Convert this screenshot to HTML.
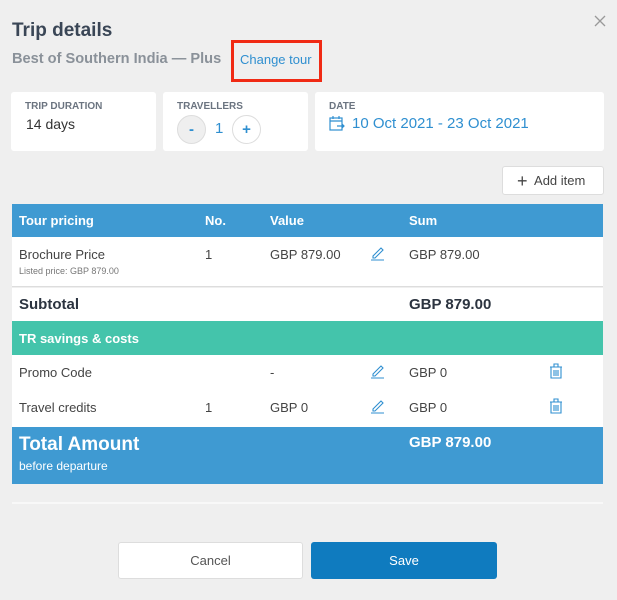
<!DOCTYPE html>
<html><head><meta charset="utf-8"><style>
*{margin:0;padding:0;box-sizing:border-box}
body{width:617px;height:600px;background:#efefef;font-family:"Liberation Sans",Arial,sans-serif;position:relative;overflow:hidden;color:#333}
.a{position:absolute}
.card{position:absolute;background:#fff;border-radius:3px;top:92px;height:59px}
.lbl{position:absolute;left:14px;top:9px;font-size:10px;font-weight:bold;color:#6b7480}
.row{position:absolute;left:12px;width:591px}
.t{position:absolute;font-size:13px;color:#444}
.w{color:#fff;font-weight:bold}
.circ{position:absolute;width:29px;height:29px;border-radius:50%;border:1px solid #ddd;text-align:center;line-height:27px;font-size:15px;color:#2f8fd0;font-weight:bold}
</style></head><body>
<div class="a" style="left:12px;top:20px;font-size:19px;font-weight:bold;color:#3a4656">Trip details</div>
<svg class="a" style="left:594px;top:15px" width="12" height="12" viewBox="0 0 12 12" stroke="#999" stroke-width="1.3"><path d="M1 1l10 10M11 1L1 11"/></svg>
<div class="a" style="left:12px;top:51px;font-size:14.6px;font-weight:bold;color:#8a9199">Best of Southern India — Plus</div>
<div class="a" style="left:231px;top:40px;width:91px;height:42px;border:3px solid #f02a14"></div>
<div class="a" style="left:240px;top:52px;font-size:13px;color:#2f8fd0">Change tour</div>

<div class="card" style="left:11px;width:145px"><div class="lbl">TRIP DURATION</div><div class="a" style="left:15px;top:24px;font-size:14px;color:#333">14 days</div></div>
<div class="card" style="left:163px;width:145px"><div class="lbl">TRAVELLERS</div>
<div class="circ" style="left:14px;top:23px;background:#efefef">-</div>
<div class="a" style="left:52px;top:28px;font-size:15px;color:#2f8fd0">1</div>
<div class="circ" style="left:69px;top:23px">+</div></div>
<div class="card" style="left:315px;width:289px"><div class="lbl">DATE</div>
<svg class="a" style="left:14px;top:23px" width="16" height="17" viewBox="0 0 16 17" fill="none" stroke="#2f8fd0" stroke-width="1.2"><rect x="1" y="3" width="12" height="12"/><path d="M1 6h12M4 1v3M10 1v3M8 11h7M13 9l2 2-2 2"/></svg>
<div class="a" style="left:37px;top:23px;font-size:15px;color:#2f8fd0">10 Oct 2021 - 23 Oct 2021</div></div>

<div class="a" style="left:502px;top:166px;width:102px;height:29px;background:#fff;border:1px solid #ddd;border-radius:3px;font-size:13px;color:#444;line-height:27px;padding-left:14px"><span style="font-size:18px;vertical-align:-2px">+</span>&nbsp; Add item</div>

<div class="row" style="top:204px;height:33px;background:#3f9ad2"></div>
<div class="t w" style="left:19px;top:213px">Tour pricing</div>
<div class="t w" style="left:205px;top:213px">No.</div>
<div class="t w" style="left:270px;top:213px">Value</div>
<div class="t w" style="left:409px;top:213px">Sum</div>

<div class="row" style="top:237px;height:50px;background:#fff;border-bottom:1px solid #ddd"></div>
<div class="t" style="left:19px;top:247px">Brochure Price</div>
<div class="t" style="left:19px;top:266px;font-size:9px;color:#777">Listed price: GBP 879.00</div>
<div class="t" style="left:205px;top:247px">1</div>
<div class="t" style="left:270px;top:247px">GBP 879.00</div>
<div class="t" style="left:409px;top:247px">GBP 879.00</div>

<div class="row" style="top:288px;height:33px;background:#fff"></div>
<div class="t" style="left:19px;top:296px;font-size:15px;font-weight:bold;color:#2c3440">Subtotal</div>
<div class="t" style="left:409px;top:296px;font-size:15px;font-weight:bold;color:#2c3440">GBP 879.00</div>

<div class="row" style="top:321px;height:34px;background:#44c4ab"></div>
<div class="t w" style="left:19px;top:331px">TR savings &amp; costs</div>

<div class="row" style="top:355px;height:72px;background:#fff"></div>
<div class="t" style="left:19px;top:365px">Promo Code</div>
<div class="t" style="left:270px;top:365px">-</div>
<div class="t" style="left:409px;top:365px">GBP 0</div>
<div class="t" style="left:19px;top:400px">Travel credits</div>
<div class="t" style="left:205px;top:400px">1</div>
<div class="t" style="left:270px;top:400px">GBP 0</div>
<div class="t" style="left:409px;top:400px">GBP 0</div>

<svg class="a" style="left:370px;top:245px" width="16" height="16" viewBox="0 0 16 16" fill="none" stroke="#2f8fd0" stroke-width="1.1"><path d="M3 11l8-8 2 2-8 8H3z M1 15h13"/></svg>
<svg class="a" style="left:370px;top:363px" width="16" height="16" viewBox="0 0 16 16" fill="none" stroke="#2f8fd0" stroke-width="1.1"><path d="M3 11l8-8 2 2-8 8H3z M1 15h13"/></svg>
<svg class="a" style="left:370px;top:398px" width="16" height="16" viewBox="0 0 16 16" fill="none" stroke="#2f8fd0" stroke-width="1.1"><path d="M3 11l8-8 2 2-8 8H3z M1 15h13"/></svg>
<svg class="a" style="left:549px;top:363px" width="14" height="16" viewBox="0 0 14 16" fill="none" stroke="#2f8fd0" stroke-width="1.1"><path d="M1 4h12M5 4V1h4v3M2 4v11h10V4M5 7v6M7 7v6M9 7v6"/></svg>
<svg class="a" style="left:549px;top:398px" width="14" height="16" viewBox="0 0 14 16" fill="none" stroke="#2f8fd0" stroke-width="1.1"><path d="M1 4h12M5 4V1h4v3M2 4v11h10V4M5 7v6M7 7v6M9 7v6"/></svg>

<div class="row" style="top:427px;height:57px;background:#3f9ad2"></div>
<div class="t w" style="left:19px;top:434px;font-size:19px">Total Amount</div>
<div class="t" style="left:19px;top:459px;color:#fff;font-size:12px">before departure</div>
<div class="t w" style="left:409px;top:434px;font-size:15px">GBP 879.00</div>

<div class="a" style="left:12px;top:502px;width:591px;height:2px;background:#f8f8f8"></div>

<div class="a" style="left:118px;top:542px;width:185px;height:37px;background:#fff;border:1px solid #ddd;border-radius:3px;text-align:center;line-height:35px;font-size:13px;color:#555">Cancel</div>
<div class="a" style="left:311px;top:542px;width:186px;height:37px;background:#0f7bbf;border-radius:3px;text-align:center;line-height:37px;font-size:13px;color:#fff">Save</div>
</body></html>
